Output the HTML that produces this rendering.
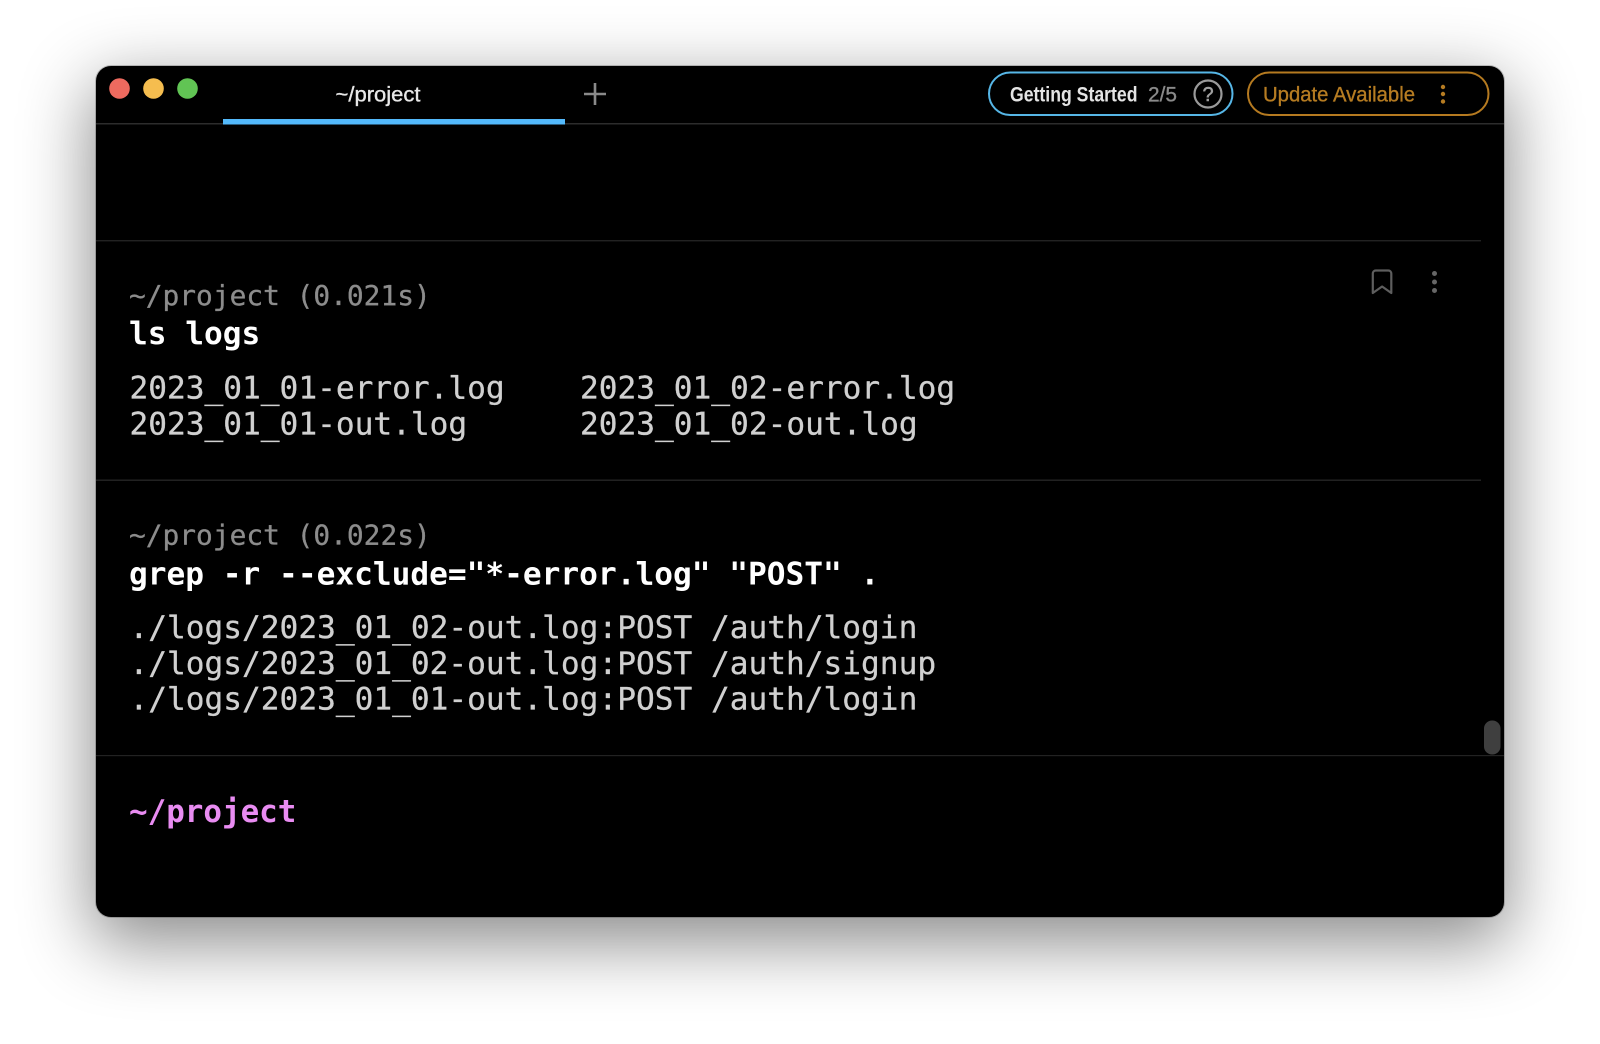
<!DOCTYPE html>
<html><head><meta charset="utf-8">
<style>
html,body{margin:0;padding:0;width:1600px;height:1044px;background:#fff;overflow:hidden}
#win{position:absolute;left:96px;top:66px;width:1408px;height:851px;background:#000;border-radius:15px;box-shadow:0 22px 70px 4px rgba(0,0,0,.46),0 0 0 1px rgba(0,0,0,.2)}
svg{position:absolute;left:0;top:0}
.m{font-family:"DejaVu Sans Mono",monospace;font-size:31.17px;white-space:pre}
.o{fill:#d0d0d0;stroke:#d0d0d0;stroke-width:.3px}
.p{fill:#8c8c8c;stroke:#8c8c8c;stroke-width:.3px;font-size:27.85px}
.b{fill:#fff;font-weight:bold}
.u{font-family:"Liberation Sans",sans-serif;font-size:21px;white-space:pre;stroke-width:.35px}
</style></head>
<body>
<div id="win"></div>
<svg width="1600" height="1044" viewBox="0 0 1600 1044">
<circle cx="119.5" cy="88.5" r="10.3" fill="#ee6a5f"/>
<circle cx="153.5" cy="88.5" r="10.3" fill="#f5bd4f"/>
<circle cx="187.5" cy="88.5" r="10.3" fill="#61c454"/>

<rect x="96" y="123" width="1408" height="1.5" fill="#2c2c2c"/>
<rect x="223" y="119" width="342" height="5.5" fill="#53b9fb"/>
<text class="u" x="335.5" y="101.5" fill="#e8e8e8" stroke="#e8e8e8" textLength="85" lengthAdjust="spacingAndGlyphs">~/project</text>
<path d="M595 83v22M584 94h22" stroke="#8a8a8a" stroke-width="2.6" fill="none"/>

<rect x="989" y="72.5" width="243.5" height="42.5" rx="21.25" fill="none" stroke="#56b6e6" stroke-width="2"/>
<text class="u" x="1010" y="101.5" fill="#e4e4e4" font-weight="bold" textLength="127.5" lengthAdjust="spacingAndGlyphs">Getting Started</text>
<text class="u" x="1148" y="101.5" fill="#8a8a8a" stroke="#8a8a8a" textLength="29" lengthAdjust="spacingAndGlyphs">2/5</text>
<circle cx="1208" cy="94" r="13.5" fill="none" stroke="#9a9a9a" stroke-width="2.2"/>
<text x="1208" y="101" text-anchor="middle" font-family="Liberation Sans,sans-serif" font-size="20" fill="#a0a0a0" stroke="#a0a0a0" stroke-width=".5">?</text>

<rect x="1248" y="72.5" width="240.5" height="42.5" rx="21.25" fill="none" stroke="#b57a20" stroke-width="2"/>
<text class="u" x="1263" y="101.5" fill="#b67c22" stroke="#b67c22" textLength="152" lengthAdjust="spacingAndGlyphs">Update Available</text>
<circle cx="1443" cy="87" r="2.2" fill="#b67c22"/><circle cx="1443" cy="94" r="2.2" fill="#b67c22"/><circle cx="1443" cy="101.5" r="2.2" fill="#b67c22"/>

<rect x="96" y="240" width="1385" height="1.4" fill="#222"/>
<rect x="96" y="479.5" width="1385" height="1.4" fill="#252525"/>
<rect x="96" y="755" width="1408" height="1.2" fill="#222"/>

<path d="M1372.800 293V273.500a3 3 0 0 1 3-3h12.500a3 3 0 0 1 3 3V293l-9.200-6.500z" fill="none" stroke="#5e5e5e" stroke-width="2.2" stroke-linejoin="round"/>
<circle cx="1434.5" cy="273.5" r="2.5" fill="#666"/><circle cx="1434.5" cy="282" r="2.5" fill="#666"/><circle cx="1434.5" cy="290.5" r="2.5" fill="#666"/>

<text class="m p" x="129" y="305">~/project (0.021s)</text>
<text class="m b" x="129" y="344">ls logs</text>
<text class="m o" x="129.500" y="398.500">2023_01_01-error.log</text>
<text class="m o" x="580" y="398.500">2023_01_02-error.log</text>
<text class="m o" x="129.500" y="434.500">2023_01_01-out.log</text>
<text class="m o" x="580" y="434.500">2023_01_02-out.log</text>

<text class="m p" x="129" y="544.500">~/project (0.022s)</text>
<text class="m b" x="129" y="584.500">grep -r --exclude="*-error.log" "POST" .</text>
<text class="m o" x="129.500" y="638">./logs/2023_01_02-out.log:POST /auth/login</text>
<text class="m o" x="129.500" y="674">./logs/2023_01_02-out.log:POST /auth/signup</text>
<text class="m o" x="129.500" y="709.500">./logs/2023_01_01-out.log:POST /auth/login</text>

<text class="m" x="129" y="822" fill="#e98cf2" font-weight="bold" style="font-size:30.9px">~/project</text>

<rect x="1484" y="720.500" width="16.500" height="34" rx="8" fill="#3f3f3f"/>
</svg>
</body></html>
